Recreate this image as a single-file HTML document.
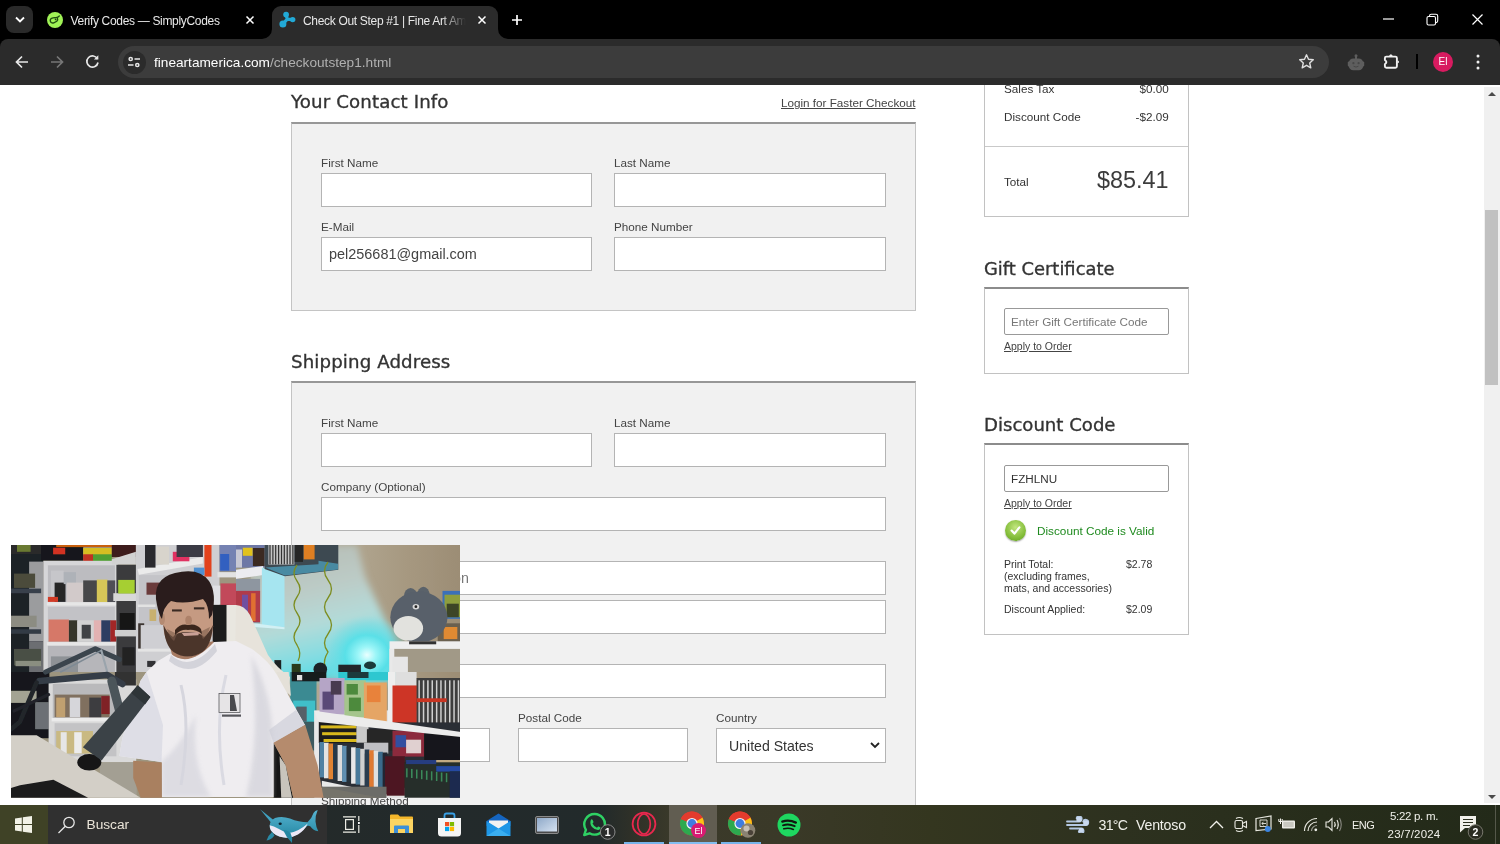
<!DOCTYPE html>
<html lang="en">
<head>
<meta charset="utf-8">
<title>Check Out Step #1 | Fine Art America</title>
<style>
*{box-sizing:border-box;margin:0;padding:0}
body{opacity:0.9999}
html,body{width:1500px;height:844px;overflow:hidden;background:#fff;font-family:"Liberation Sans",sans-serif;color:#333}
.abs{position:absolute}
#tabstrip{z-index:5;position:absolute;left:0;top:0;width:1500px;height:50px;background:#000}
#toolbar{z-index:6;position:absolute;left:0;top:39px;width:1500px;height:46px;background:#2b2b2b;border-radius:8px 8px 0 0}
#page{position:absolute;left:0;top:0;width:1484px;height:805px;background:#fff;overflow:hidden}
#scroll{position:absolute;left:1484px;top:87px;width:16px;height:716px;background:#f0f0f0}
#webcam{position:absolute;left:11px;top:545px;width:449px;height:253px;overflow:hidden;z-index:7;background:#999}
#taskbar{z-index:8;position:absolute;left:0;top:805px;width:1500px;height:39px;background:linear-gradient(90deg,#252a27 0,#232a2b 30%,#222a2b 40%,#2e3028 42%,#3b3a2a 45%,#3a3928 52%,#34361f 62%,#2d311f 75%,#272d1b 88%,#232a19 100%);overflow:hidden}
.ui{font-family:"DejaVu Sans","Liberation Sans",sans-serif}
.tabtxt{position:absolute;top:13.7px;font-size:12px;letter-spacing:-0.32px;line-height:14px;color:#e8e8e8;white-space:nowrap;font-family:"Liberation Sans",sans-serif}
h2{-webkit-text-stroke:0.35px #333;position:absolute;font-family:"DejaVu Sans","Liberation Sans",sans-serif;font-weight:normal;color:#333;white-space:nowrap;line-height:1}
.box{position:absolute;background:#f1f1f1;border:1px solid #c4c4c4;border-top:2px solid #979797}
.wbox{position:absolute;background:#fff;border:1px solid #c2c2c2}
.inp{position:absolute;background:#fff;border:1px solid #b4b4b4;height:34px}
.lbl{position:absolute;font-size:11.7px;color:#444;white-space:nowrap;line-height:15px}
.t{position:absolute;white-space:nowrap}
</style>
</head>
<body>
<div id="tabstrip">
<div class="abs" style="left:6px;top:6px;width:27px;height:27px;border-radius:8px;background:#2a2a2a"></div>
<svg class="abs" style="left:13px;top:14px" width="14" height="12" viewBox="0 0 14 12"><path d="M3 3.5 L7 7.5 L11 3.5" fill="none" stroke="#fff" stroke-width="1.8"/></svg>
<div class="abs" style="left:47px;top:12px;width:16px;height:16px;border-radius:50%;background:#a0f256"></div>
<svg class="abs" style="left:47px;top:12px" width="16" height="16" viewBox="0 0 16 16"><path d="M3.200 8.800 Q3 6.200 6 5.800 L9.500 5.500 Q11 5.300 12.300 4 M3.200 8.800 Q4 11.600 6.800 10.800 L9.800 9.200 Q11.300 7.800 10.300 5.600" fill="none" stroke="#1f4d10" stroke-width="1.300" stroke-linecap="round"/><circle cx="8.600" cy="7.400" r="0.900" fill="#1f4d10"/></svg>
<div class="tabtxt" style="left:70.5px">Verify Codes — SimplyCodes</div>
<svg class="abs" style="left:245px;top:15px" width="10" height="10" viewBox="0 0 10 10"><path d="M1.5 1.5 L8.5 8.5 M8.5 1.5 L1.5 8.5" stroke="#fff" stroke-width="1.5"/></svg>
<div class="abs" style="left:272px;top:6px;width:226px;height:34px;border-radius:9px 9px 0 0;background:#2b2b2b"></div>
<svg class="abs" style="left:262px;top:29px" width="10" height="10" viewBox="0 0 10 10"><path d="M10 0 V10 H0 A10 10 0 0 0 10 0Z" fill="#2b2b2b"/></svg>
<svg class="abs" style="left:498px;top:29px" width="10" height="10" viewBox="0 0 10 10"><path d="M0 0 V10 H10 A10 10 0 0 1 0 0Z" fill="#2b2b2b"/></svg>
<svg class="abs" style="left:279px;top:11px" width="18" height="18" viewBox="0 0 18 18"><g fill="#22a9d6"><circle cx="7.100" cy="3.600" r="2.900"/><circle cx="13.700" cy="8.600" r="2.700"/><circle cx="3.900" cy="12.900" r="3.500"/></g><path d="M7.100 3.600 L8.300 8.200 L13.700 8.600 M8.300 8.200 L3.900 12.900" fill="none" stroke="#22a9d6" stroke-width="3.200" stroke-linecap="round"/></svg>
<div class="tabtxt" style="left:303px;width:163px;overflow:hidden;-webkit-mask-image:linear-gradient(90deg,#000 85%,transparent);mask-image:linear-gradient(90deg,#000 85%,transparent)">Check Out Step #1 | Fine Art America</div>
<svg class="abs" style="left:477px;top:15px" width="10" height="10" viewBox="0 0 10 10"><path d="M1.5 1.5 L8.5 8.5 M8.5 1.5 L1.5 8.5" stroke="#fff" stroke-width="1.5"/></svg>
<svg class="abs" style="left:511px;top:14px" width="12" height="12" viewBox="0 0 12 12"><path d="M6 1 V11 M1 6 H11" stroke="#fff" stroke-width="1.7"/></svg>
<svg class="abs" style="left:1383px;top:18px" width="11" height="2" viewBox="0 0 11 2"><path d="M0 1 H11" stroke="#fff" stroke-width="1.2"/></svg>
<svg class="abs" style="left:1426px;top:13px" width="13" height="13" viewBox="0 0 13 13"><rect x="1" y="3.5" width="8.5" height="8.5" rx="1.5" fill="none" stroke="#fff" stroke-width="1.1"/><path d="M3.5 3.5 V3 A1.7 1.7 0 0 1 5.2 1.3 H10 A1.7 1.7 0 0 1 11.7 3 V8 A1.7 1.7 0 0 1 10 9.6 H9.5" fill="none" stroke="#fff" stroke-width="1.1"/></svg>
<svg class="abs" style="left:1472px;top:14px" width="11" height="11" viewBox="0 0 11 11"><path d="M0.5 0.5 L10.5 10.5 M10.5 0.5 L0.5 10.5" stroke="#fff" stroke-width="1.2"/></svg>
</div>
<div id="toolbar">
<svg class="abs" style="left:14px;top:14.500px" width="16" height="16" viewBox="0 0 16 16"><path d="M14 8 H3 M8 2.5 L2.5 8 L8 13.5" fill="none" stroke="#e8e8e8" stroke-width="1.7"/></svg>
<svg class="abs" style="left:48.500px;top:14.500px" width="16" height="16" viewBox="0 0 16 16"><path d="M2 8 H13 M8 2.5 L13.5 8 L8 13.5" fill="none" stroke="#777" stroke-width="1.7"/></svg>
<svg class="abs" style="left:84px;top:14px" width="17" height="17" viewBox="0 0 17 17"><path d="M13.5 6 A5.6 5.6 0 1 0 14 9.5" fill="none" stroke="#e8e8e8" stroke-width="1.7"/><path d="M14.3 2.2 V6.6 H9.9 Z" fill="#e8e8e8"/></svg>
<div class="abs" style="left:118px;top:6.500px;width:1211px;height:32.500px;border-radius:16.500px;background:#3c3c3c"></div>
<div class="abs" style="left:122.500px;top:11.500px;width:23px;height:23px;border-radius:50%;background:#2b2b2b"></div>
<svg class="abs" style="left:127px;top:15.500px" width="14" height="14" viewBox="0 0 14 14"><g fill="none" stroke="#e8e8e8" stroke-width="1.5"><circle cx="3.7" cy="4" r="1.6"/><path d="M7.5 4 H13"/><circle cx="10.3" cy="10" r="1.6"/><path d="M1 10 H6.5"/></g></svg>
<div class="abs" style="left:154px;top:14.8px;font-size:13.65px;line-height:18px;color:#fff;white-space:nowrap">fineartamerica.com<span style="color:#b0b0b0">/checkoutstep1.html</span></div>
<svg class="abs" style="left:1298px;top:14px" width="17" height="17" viewBox="0 0 17 17"><path d="M8.5 1.8 L10.5 6.3 L15.3 6.8 L11.7 10 L12.8 14.8 L8.5 12.3 L4.2 14.8 L5.3 10 L1.7 6.8 L6.5 6.3 Z" fill="none" stroke="#e0e0e0" stroke-width="1.4" stroke-linejoin="round"/></svg>
<svg class="abs" style="left:1347px;top:14px" width="18" height="18" viewBox="0 0 18 18"><g fill="#5e5e5e"><rect x="1.800" y="5.500" width="14.400" height="11.700" rx="4.500"/><rect x="8" y="2.500" width="2" height="4"/><circle cx="9" cy="2.700" r="1.500"/><rect x="0.800" y="8.500" width="2.500" height="5" rx="1"/><rect x="14.700" y="8.500" width="2.500" height="5" rx="1"/></g><circle cx="6.400" cy="10.200" r="1.100" fill="#474747"/><circle cx="11.600" cy="10.200" r="1.100" fill="#474747"/><path d="M6.500 13.200 Q9 15 11.500 13.200" fill="none" stroke="#474747" stroke-width="1"/></svg>
<svg class="abs" style="left:1382px;top:12px" width="20" height="20" viewBox="0 0 20 20"><path d="M4.400 5.600 H13.400 Q14.900 5.600 14.900 7.100 V15.300 Q14.900 16.800 13.400 16.800 H4.400 Q2.900 16.800 2.900 15.300 V13.200 Q5.900 11.100 2.900 9 V7.100 Q2.900 5.600 4.400 5.600 Z" fill="none" stroke="#f0f0f0" stroke-width="1.900" stroke-linejoin="round"/><path d="M7 5 Q8.900 1.600 10.800 5 Z M15.500 9.200 Q18.700 10.900 15.500 12.600 Z" fill="#f0f0f0"/></svg>
<div class="abs" style="left:1416px;top:15px;width:2px;height:15px;background:#000"></div>
<div class="abs" style="left:1433px;top:13px;width:20px;height:20px;border-radius:50%;background:#d81b60;color:#fff;font-size:10px;line-height:20px;text-align:center">El</div>
<svg class="abs" style="left:1476px;top:15px" width="4" height="16" viewBox="0 0 4 16"><g fill="#f0f0f0"><circle cx="2" cy="2" r="1.5"/><circle cx="2" cy="8" r="1.5"/><circle cx="2" cy="14" r="1.5"/></g></svg>
</div>
<div id="page">
<h2 style="left:291px;top:93px;font-size:18.2px;letter-spacing:0.12px">Your Contact Info</h2>
<div class="t" style="left:781px;top:96px;font-size:11.7px;color:#444;text-decoration:underline">Login for Faster Checkout</div>
<div class="box" style="left:291px;top:122px;width:625px;height:189px"></div>
<div class="lbl" style="left:321px;top:155px">First Name</div>
<div class="lbl" style="left:614px;top:155px">Last Name</div>
<div class="inp" style="left:321px;top:173px;width:271px"></div>
<div class="inp" style="left:614px;top:173px;width:272px"></div>
<div class="lbl" style="left:321px;top:219px">E-Mail</div>
<div class="lbl" style="left:614px;top:219px">Phone Number</div>
<div class="inp" style="left:321px;top:237px;width:271px"></div>
<div class="inp" style="left:614px;top:237px;width:272px"></div>
<div class="t" style="left:329px;top:246px;font-size:14.45px;color:#444">pel256681@gmail.com</div>

<h2 style="left:291px;top:353px;font-size:18.2px;letter-spacing:0.12px">Shipping Address</h2>
<div class="box" style="left:291px;top:381px;width:625px;height:440px"></div>
<div class="lbl" style="left:321px;top:415px">First Name</div>
<div class="lbl" style="left:614px;top:415px">Last Name</div>
<div class="inp" style="left:321px;top:433px;width:271px"></div>
<div class="inp" style="left:614px;top:433px;width:272px"></div>
<div class="lbl" style="left:321px;top:479px">Company (Optional)</div>
<div class="inp" style="left:321px;top:497px;width:565px"></div>
<div class="lbl" style="left:321px;top:543px">Address</div>
<div class="inp" style="left:321px;top:561px;width:565px"></div>
<div class="t" style="left:329px;top:569.5px;font-size:14.25px;color:#777">Begin Typing Location</div>
<div class="inp" style="left:321px;top:600px;width:565px"></div>
<div class="lbl" style="left:321px;top:646px">City</div>
<div class="inp" style="left:321px;top:664px;width:565px"></div>
<div class="lbl" style="left:321px;top:710px">State</div>
<div class="lbl" style="left:518px;top:710px">Postal Code</div>
<div class="lbl" style="left:716px;top:710px">Country</div>
<div class="inp" style="left:321px;top:728px;width:169px"></div>
<div class="inp" style="left:518px;top:728px;width:170px"></div>
<div class="inp" style="left:716px;top:728px;width:170px;height:35px"></div>
<div class="t" style="left:729px;top:737.5px;font-size:14.1px;color:#333">United States</div>
<svg class="abs" style="left:869px;top:740px" width="12" height="10" viewBox="0 0 12 10"><path d="M2 3 L6 7 L10 3" fill="none" stroke="#222" stroke-width="1.8"/></svg>
<div class="lbl" style="left:321px;top:793px">Shipping Method</div>

<div class="wbox" style="left:984px;top:60px;width:205px;height:157px"></div>
<div class="abs" style="left:985px;top:146px;width:203px;height:1px;background:#c9c9c9"></div>
<div class="t" style="left:1004px;top:82px;font-size:11.7px;color:#333">Sales Tax</div>
<div class="t" style="left:1139.5px;top:82px;font-size:11.7px;color:#333">$0.00</div>
<div class="t" style="left:1004px;top:110px;font-size:11.7px;color:#333">Discount Code</div>
<div class="t" style="left:1135.5px;top:110px;font-size:11.7px;color:#333">-$2.09</div>
<div class="t" style="left:1004px;top:174.5px;font-size:11.7px;color:#333">Total</div>
<div class="t" style="left:1097px;top:166.5px;font-size:23.4px;color:#3c3c3c">$85.41</div>

<h2 style="left:984px;top:259.5px;font-size:17.9px">Gift Certificate</h2>
<div class="wbox" style="left:984px;top:287px;width:205px;height:87px;border-top:2px solid #8c8c8c"></div>
<div class="inp" style="left:1004px;top:308px;width:165px;height:27px;border-color:#999;border-radius:2px"></div>
<div class="t" style="left:1011px;top:314.5px;font-size:11.7px;color:#777">Enter Gift Certificate Code</div>
<div class="t" style="left:1004px;top:339.5px;font-size:10.5px;color:#444;text-decoration:underline">Apply to Order</div>

<h2 style="left:984px;top:415.5px;font-size:18.1px">Discount Code</h2>
<div class="wbox" style="left:984px;top:443px;width:205px;height:192px;border-top:2px solid #8c8c8c"></div>
<div class="inp" style="left:1004px;top:465px;width:165px;height:27px;border-color:#999;border-radius:2px"></div>
<div class="t" style="left:1011px;top:471.5px;font-size:11.7px;color:#333">FZHLNU</div>
<div class="t" style="left:1004px;top:496.5px;font-size:10.5px;color:#444;text-decoration:underline">Apply to Order</div>
<div class="abs" style="left:1005px;top:519.5px;width:21px;height:21px;border-radius:50%;background:radial-gradient(circle at 50% 35%,#c2e67e,#7fba35 65%,#5f9c24);box-shadow:0 1px 1.5px rgba(0,0,0,.35)"></div>
<svg class="abs" style="left:1009px;top:523.5px" width="13" height="13" viewBox="0 0 13 13"><path d="M2.6 6.6 L5.4 9.6 L10.4 3.4" fill="none" stroke="#fff" stroke-width="2.2" stroke-linecap="round" stroke-linejoin="round"/></svg>
<div class="t" style="left:1037px;top:524px;font-size:11.75px;color:#1e8a1e">Discount Code is Valid</div>
<div class="t" style="left:1004px;top:557.5px;font-size:10.5px;color:#333;line-height:12px">Print Total:<br>(excluding frames,<br>mats, and accessories)</div>
<div class="t" style="left:1126px;top:557.5px;font-size:10.5px;color:#333;line-height:12px">$2.78</div>
<div class="t" style="left:1004px;top:603px;font-size:10.5px;color:#333;line-height:12px">Discount Applied:</div>
<div class="t" style="left:1126px;top:603px;font-size:10.5px;color:#333;line-height:12px">$2.09</div>
</div>
<div id="scroll">
<svg class="abs" style="left:4px;top:5px" width="8" height="4" viewBox="0 0 8 4"><path d="M0 4 L4 0 L8 4Z" fill="#4a4a4a"/></svg>
<div class="abs" style="left:1px;top:123px;width:13px;height:175px;background:#c1c1c1"></div>
<svg class="abs" style="left:4px;top:707.500px" width="8" height="4" viewBox="0 0 8 4"><path d="M0 0 L4 4 L8 0Z" fill="#4a4a4a"/></svg>
</div>
<div id="webcam"><!--WC--><svg width="449" height="253" viewBox="0 0 449 253" style="position:absolute;left:0;top:0"><defs><linearGradient id="wallg" x1="0" y1="0" x2="1" y2="0"><stop offset="0" stop-color="#b4aa96"/><stop offset="0.5" stop-color="#b0a58f"/><stop offset="0.75" stop-color="#a69880"/><stop offset="1" stop-color="#9c8d75"/></linearGradient><linearGradient id="beam" x1="0" y1="0" x2="0.25" y2="1"><stop offset="0" stop-color="#b5bab2"/><stop offset="0.4" stop-color="#bccbc6"/><stop offset="0.65" stop-color="#b4dad8"/><stop offset="0.88" stop-color="#84dde2"/><stop offset="1" stop-color="#62dbe3"/></linearGradient><radialGradient id="glow"><stop offset="0" stop-color="#eaffff"/><stop offset="0.2" stop-color="#9df6f8"/><stop offset="0.5" stop-color="#55e0e8" stop-opacity="0.9"/><stop offset="0.8" stop-color="#6adde4" stop-opacity="0.4"/><stop offset="1" stop-color="#84dde2" stop-opacity="0"/></radialGradient><filter id="b2" x="-20%" y="-20%" width="140%" height="140%"><feGaussianBlur stdDeviation="2"/></filter><filter id="b4" x="-10%" y="-10%" width="120%" height="120%"><feGaussianBlur stdDeviation="3.5"/></filter><filter id="soft" x="-2%" y="-2%" width="104%" height="104%"><feGaussianBlur stdDeviation="0.65"/></filter></defs><g filter="url(#soft)"><rect x="0" y="0" width="449" height="253" fill="#9d957f"/>
<rect x="240" y="0" width="209" height="200" fill="url(#wallg)"/>
<polygon points="240,0 346,0 354,32 381,90 386,135 240,135" fill="url(#beam)" filter="url(#b4)"/>
<ellipse cx="356" cy="110" rx="44" ry="40" fill="url(#glow)"/>
<rect x="0.0" y="0.0" width="32.4" height="127.0" fill="#1c2026"/>
<rect x="18.1" y="16.6" width="14.3" height="79.7" fill="#9b9c9e"/>
<rect x="18.1" y="96.3" width="14.3" height="30.7" fill="#6c6e72"/>
<rect x="0.0" y="0.0" width="30.1" height="9.0" fill="#2a2c2a"/>
<rect x="6.0" y="0.0" width="13.6" height="6.8" fill="#6a7a30"/>
<rect x="3.0" y="28.6" width="21.1" height="14.3" fill="#4c4c3a"/>
<rect x="0.0" y="43.6" width="30.1" height="4.6" fill="#39414b"/>
<rect x="0.0" y="70.7" width="25.6" height="11.3" fill="#8c8c82"/>
<rect x="0.0" y="84.3" width="30.1" height="4.5" fill="#333b45"/>
<rect x="3.0" y="103.9" width="27.1" height="16.5" fill="#4a5044"/>
<rect x="4.5" y="115.9" width="25.6" height="5.3" fill="#8a8e80"/>
<rect x="30.1" y="0.0" width="42.1" height="15.8" fill="#19191b"/>
<rect x="42.1" y="2.7" width="12.1" height="6.6" fill="#d23222"/>
<rect x="45.2" y="0.0" width="58.7" height="2.1" fill="#c8600f"/>
<rect x="72.2" y="3.0" width="28.6" height="6.8" fill="#d6be22"/>
<rect x="81.3" y="9.3" width="19.5" height="9.1" fill="#4f9f31"/>
<rect x="72.2" y="9.3" width="9.8" height="9.1" fill="#c03020"/>
<rect x="100.8" y="0.0" width="24.1" height="12.0" fill="#3e1a1a"/>
<rect x="32.4" y="15.8" width="74.5" height="111.2" fill="#d6d6d8"/>
<rect x="36.9" y="20.3" width="67.0" height="36.9" fill="#bcbcc0"/>
<rect x="36.9" y="61.7" width="67.0" height="35.4" fill="#c2c2c6"/>
<rect x="36.9" y="100.8" width="67.0" height="26.2" fill="#b6b6ba"/>
<rect x="39.9" y="25.6" width="12.8" height="31.6" fill="#c6c6ca"/>
<rect x="43.6" y="37.6" width="10.9" height="19.3" fill="#262628"/>
<rect x="52.7" y="27.1" width="12.3" height="12.0" fill="#aeb2b8"/>
<rect x="55.7" y="37.6" width="23.3" height="19.6" fill="#d2caca"/>
<rect x="72.2" y="35.4" width="13.9" height="21.8" fill="#464648"/>
<rect x="85.8" y="34.6" width="10.8" height="22.6" fill="#d6c658"/>
<rect x="96.3" y="35.4" width="7.9" height="21.8" fill="#505054"/>
<rect x="36.9" y="51.9" width="10.1" height="5.0" fill="#d23a28"/>
<rect x="35.8" y="57.2" width="69.9" height="3.3" fill="#e6e6e6"/>
<rect x="37.6" y="74.5" width="20.3" height="22.1" fill="#d67868"/>
<rect x="57.9" y="75.3" width="8.6" height="21.3" fill="#36362c"/>
<rect x="66.2" y="75.3" width="16.9" height="21.3" fill="#d2d2d2"/>
<rect x="70.7" y="79.8" width="9.1" height="13.8" fill="#404244"/>
<rect x="82.8" y="75.3" width="7.8" height="21.3" fill="#e2b2b2"/>
<rect x="90.3" y="75.3" width="9.3" height="21.3" fill="#2e3e62"/>
<rect x="99.3" y="75.3" width="6.1" height="21.3" fill="#a22828"/>
<rect x="35.8" y="97.1" width="69.9" height="3.3" fill="#e6e6e6"/>
<rect x="39.9" y="111.4" width="27.1" height="15.6" fill="#8e9296"/>
<rect x="105.4" y="19.6" width="19.8" height="107.4" fill="#3a3a3c"/>
<polygon points="100.8,14.3 124.9,6.8 124.9,19.6 100.8,19.6" fill="#d2d2d2"/>
<rect x="102.3" y="48.2" width="22.9" height="7.8" fill="#d8d8d8"/>
<rect x="103.9" y="85.0" width="21.3" height="6.4" fill="#cecece"/>
<rect x="107.2" y="34.9" width="16.5" height="13.6" fill="#a6cf30"/>
<rect x="108.7" y="68.0" width="15.0" height="16.6" fill="#161618"/>
<rect x="111.4" y="102.3" width="12.3" height="18.1" fill="#222224"/>
<rect x="124.9" y="0.0" width="83.6" height="127.0" fill="#cfcfd2"/>
<rect x="127.9" y="30.1" width="67.8" height="75.3" fill="#c4c4c8"/>
<polygon points="126.4,24.1 191.9,12.0 191.9,18.4 127.9,29.7" fill="#ebebeb"/>
<rect x="134.0" y="0.0" width="10.5" height="22.6" fill="#2b2b2d"/>
<rect x="145.2" y="1.5" width="12.8" height="18.1" fill="#d8d4cc"/>
<rect x="161.8" y="6.8" width="16.6" height="9.5" fill="#e03262"/>
<rect x="165.6" y="0.0" width="26.3" height="12.0" fill="#3a3a44"/>
<rect x="193.4" y="0.0" width="7.1" height="31.6" fill="#e2431f"/>
<rect x="182.9" y="22.6" width="10.5" height="7.5" fill="#5090d0"/>
<rect x="135.5" y="37.6" width="15.0" height="12.1" fill="#6a3a3a"/>
<rect x="126.7" y="59.5" width="17.8" height="2.5" fill="#e2e2e2"/>
<rect x="138.5" y="64.4" width="6.7" height="11.6" fill="#c8b070"/>
<rect x="127.2" y="78.3" width="6.0" height="25.6" fill="#3c3430"/>
<rect x="129.7" y="80.1" width="30.1" height="23.8" fill="#cfcfd3"/>
<rect x="126.7" y="103.6" width="34.3" height="3.0" fill="#e4e4e4"/>
<rect x="136.2" y="115.9" width="8.3" height="6.0" fill="#303034"/>
<rect x="208.5" y="0.0" width="16.5" height="26.3" fill="#7482b2"/>
<rect x="209.2" y="9.0" width="9.0" height="16.6" fill="#3060c0"/>
<rect x="206.5" y="27.1" width="18.5" height="5.3" fill="#e2e2e2"/>
<rect x="209.5" y="38.4" width="15.5" height="21.8" fill="#c24a5a"/>
<rect x="201.7" y="40.6" width="7.5" height="18.9" fill="#e0e0e4"/>
<rect x="225.0" y="0.0" width="28.6" height="22.6" fill="#6e78a6"/>
<rect x="225.0" y="4.5" width="6.0" height="18.1" fill="#c8c8d4"/>
<rect x="231.8" y="2.7" width="9.8" height="8.1" fill="#e2c21e"/>
<rect x="241.9" y="3.0" width="11.7" height="18.1" fill="#3a2a20"/>
<polygon points="225.0,24.8 252.1,21.1 252.1,30.1 225.0,33.9" fill="#ececf0"/>
<rect x="225.0" y="33.9" width="24.1" height="44.4" fill="#8e96a0"/>
<rect x="225.0" y="45.9" width="24.1" height="31.2" fill="#b03a4a"/>
<rect x="231.0" y="49.7" width="6.0" height="25.6" fill="#7050a0"/>
<rect x="240.1" y="48.2" width="4.5" height="27.8" fill="#e07030"/>
<polygon points="250.9,22.6 273.5,30.6 273.5,82.3 250.9,80.1" fill="#a6e5f0"/>
<polygon points="243.1,78.3 273.5,82.3 273.5,84.3 243.1,82.0" fill="#d2f0f4"/>
<polygon points="253.6,0.0 327.3,0.0 327.3,24.8 273.9,31.2 253.6,24.1" fill="#3c4851"/>
<polygon points="254.3,22.6 273.9,30.6 327.0,24.5 327.0,18.8 307.5,15.8 307.5,19.3" fill="#4a8aa2"/>
<rect x="257.4" y="0.0" width="26.0" height="19.6" fill="#c4c4c4"/>
<rect x="258.4" y="0.0" width="1.2" height="19.3" fill="#303030"/>
<rect x="261.3" y="0.0" width="1.2" height="19.3" fill="#303030"/>
<rect x="264.1" y="0.0" width="1.2" height="19.3" fill="#303030"/>
<rect x="267.0" y="0.0" width="1.2" height="19.3" fill="#303030"/>
<rect x="269.9" y="0.0" width="1.2" height="19.3" fill="#303030"/>
<rect x="272.7" y="0.0" width="1.2" height="19.3" fill="#303030"/>
<rect x="275.6" y="0.0" width="1.2" height="19.3" fill="#303030"/>
<rect x="278.4" y="0.0" width="1.2" height="19.3" fill="#303030"/>
<rect x="281.3" y="0.0" width="1.2" height="19.3" fill="#303030"/>
<rect x="283.7" y="0.0" width="8.3" height="16.9" fill="#262628"/>
<rect x="292.7" y="0.0" width="10.9" height="14.4" fill="#df7f20"/>
<path d="M286 20 q-6 8 0 16 q6 8 0 16 q-6 8 0 16 q6 8 0 16 q-6 8 0 16 q5 8 1 16" fill="none" stroke="#7d8e22" stroke-width="1.3"/>
<path d="M317 17 q-7 9 0 18 q7 9 0 18 q-7 9 0 18 q7 9 0 18 q-7 9 0 18 q-5 8 -3 14" fill="none" stroke="#7d8e22" stroke-width="1.3"/>
<rect x="431.5" y="45.9" width="18.5" height="27.9" fill="#3a70b8"/>
<rect x="433.5" y="49.7" width="16.5" height="22.5" fill="#8e9e3e"/>
<rect x="435.7" y="58.7" width="12.1" height="13.5" fill="#3c4428"/>
<rect x="426.7" y="78.3" width="23.3" height="20.3" fill="#6a6050"/>
<rect x="432.7" y="82.0" width="13.6" height="12.1" fill="#e08a30"/>
<ellipse cx="399.6" cy="51.9" rx="6.8" ry="9.0" fill="#5a626a"/>
<ellipse cx="412.4" cy="50.4" rx="6.3" ry="8.7" fill="#5a626a"/>
<ellipse cx="407.9" cy="72.2" rx="28.6" ry="25.6" fill="#59616a"/>
<ellipse cx="397.3" cy="83.2" rx="14.8" ry="12.3" fill="#e2e2de"/>
<ellipse cx="404.9" cy="61.7" rx="3.3" ry="2.7" fill="#d8d8d8"/>
<ellipse cx="404.9" cy="61.7" rx="1.4" ry="1.4" fill="#222"/>
<rect x="378.5" y="96.3" width="71.5" height="7.9" fill="#eeeeee"/>
<rect x="383.0" y="103.9" width="67.0" height="23.1" fill="#a19987"/>
<rect x="378.2" y="103.9" width="5.1" height="23.1" fill="#e9e9e9"/>
<rect x="398.1" y="96.3" width="27.1" height="3.0" fill="#303030"/>
<rect x="381.5" y="111.7" width="15.4" height="15.3" fill="#e6e6e6"/>
<rect x="263.4" y="115.1" width="6.8" height="11.9" fill="#1e2224"/>
<rect x="280.7" y="118.9" width="9.0" height="8.1" fill="#2a3a1e"/>
<ellipse cx="309.3" cy="124.2" rx="6.8" ry="6.8" fill="#1e2226"/>
<rect x="327.3" y="119.7" width="22.6" height="7.3" fill="#22282c"/>
<ellipse cx="359.0" cy="120.4" rx="6.0" ry="3.8" fill="#1c3a3a"/>
<rect x="0.0" y="127.0" width="38.4" height="66.2" fill="#14181c"/>
<rect x="0.0" y="145.8" width="25.6" height="12.1" fill="#a3a393"/>
<rect x="24.1" y="157.1" width="13.5" height="27.1" fill="#6c7074"/>
<rect x="37.6" y="134.5" width="87.6" height="82.8" fill="#d9d9d9"/>
<rect x="41.8" y="138.7" width="63.6" height="35.0" fill="#b9b9bb"/>
<rect x="43.6" y="149.6" width="55.0" height="22.6" fill="#80705e"/>
<rect x="58.7" y="152.6" width="10.5" height="19.6" fill="#d6d6da"/>
<rect x="45.2" y="152.6" width="9.0" height="19.6" fill="#c0a070"/>
<rect x="78.3" y="152.6" width="12.0" height="19.6" fill="#3c3c40"/>
<rect x="90.3" y="151.1" width="8.3" height="18.0" fill="#802028"/>
<rect x="40.6" y="172.9" width="67.8" height="3.5" fill="#ebebeb"/>
<rect x="43.6" y="178.2" width="61.8" height="33.1" fill="#c3c3c5"/>
<rect x="45.2" y="186.0" width="36.8" height="22.6" fill="#c9b982"/>
<rect x="49.7" y="187.2" width="6.0" height="21.1" fill="#e6e6e6"/>
<rect x="63.2" y="187.2" width="7.5" height="21.1" fill="#ececec"/>
<rect x="88.8" y="217.3" width="36.9" height="35.4" fill="#a39f93"/>
<rect x="103.9" y="127.0" width="21.0" height="13.5" fill="#303032"/>
<rect x="279.2" y="127.0" width="26.3" height="78.3" fill="#3a8a92"/>
<rect x="280.7" y="127.0" width="34.6" height="9.3" fill="#171b1f"/>
<rect x="286.0" y="130.0" width="5.2" height="5.3" fill="#e0e0e0"/>
<rect x="282.2" y="155.6" width="21.8" height="21.8" fill="#3fbfc8"/>
<rect x="285.2" y="161.6" width="10.5" height="15.1" fill="#566068"/>
<rect x="279.2" y="176.7" width="25.6" height="28.6" fill="#3c5a5e"/>
<rect x="327.3" y="127.0" width="50.0" height="8.3" fill="#2fc7d0"/>
<rect x="336.4" y="127.0" width="21.1" height="6.0" fill="#1c3a3c"/>
<rect x="303.3" y="165.4" width="146.7" height="88.6" fill="#e2e2e2"/>
<rect x="308.5" y="133.0" width="25.2" height="36.4" fill="#b5a5c6"/>
<rect x="311.5" y="146.6" width="11.3" height="18.0" fill="#5a4a78"/>
<rect x="319.8" y="136.0" width="10.6" height="13.6" fill="#4a3a50"/>
<rect x="333.4" y="135.3" width="21.3" height="37.2" fill="#a5c58d"/>
<rect x="335.6" y="139.0" width="11.3" height="10.6" fill="#4e8a3e"/>
<rect x="337.9" y="152.6" width="12.0" height="13.5" fill="#4e8a3e"/>
<rect x="352.9" y="137.5" width="22.9" height="39.5" fill="#e5a565"/>
<rect x="355.9" y="140.5" width="13.6" height="16.6" fill="#e8823a"/>
<rect x="377.0" y="127.0" width="7.8" height="51.5" fill="#eeeeee"/>
<rect x="384.5" y="127.0" width="21.1" height="13.8" fill="#dedede"/>
<rect x="381.5" y="140.5" width="24.4" height="39.5" fill="#cd3525"/>
<rect x="405.6" y="133.0" width="44.4" height="53.0" fill="#3c3c3c"/>
<rect x="407.4" y="135.3" width="1.5" height="48.9" fill="#cfcfcf"/>
<rect x="411.8" y="135.3" width="1.5" height="48.9" fill="#cfcfcf"/>
<rect x="416.1" y="135.3" width="1.6" height="48.9" fill="#cfcfcf"/>
<rect x="420.5" y="135.3" width="1.5" height="48.9" fill="#cfcfcf"/>
<rect x="424.9" y="135.3" width="1.5" height="48.9" fill="#cfcfcf"/>
<rect x="429.2" y="135.3" width="1.5" height="48.9" fill="#cfcfcf"/>
<rect x="433.6" y="135.3" width="1.5" height="48.9" fill="#cfcfcf"/>
<rect x="438.0" y="135.3" width="1.5" height="48.9" fill="#cfcfcf"/>
<rect x="442.3" y="135.3" width="1.5" height="48.9" fill="#cfcfcf"/>
<rect x="446.7" y="135.3" width="1.5" height="48.9" fill="#cfcfcf"/>
<rect x="405.6" y="153.3" width="30.1" height="3.8" fill="#c83424"/>
<rect x="303.3" y="165.8" width="4.8" height="73.3" fill="#e8e8e8"/>
<rect x="308.1" y="177.4" width="141.9" height="65.5" fill="#2c2e34"/>
<rect x="307.8" y="175.2" width="48.4" height="22.8" fill="#1e1e1e"/>
<rect x="309.6" y="180.4" width="35.8" height="3.0" fill="#d9b91f"/>
<rect x="311.1" y="187.2" width="34.6" height="3.0" fill="#d9b91f"/>
<rect x="312.6" y="194.0" width="36.1" height="3.0" fill="#d9b91f"/>
<rect x="345.4" y="179.7" width="12.1" height="18.0" fill="#c9c9c9"/>
<rect x="355.9" y="184.2" width="25.9" height="21.4" fill="#262628"/>
<rect x="352.9" y="197.7" width="24.4" height="10.9" fill="#bfbfc3"/>
<rect x="381.5" y="185.7" width="31.9" height="25.9" fill="#8c2c3c"/>
<rect x="384.5" y="190.2" width="10.6" height="12.1" fill="#3050a0"/>
<rect x="395.1" y="194.7" width="15.0" height="13.6" fill="#e0d0d0"/>
<rect x="413.1" y="188.7" width="36.9" height="28.9" fill="#19191b"/>
<rect x="420.7" y="215.0" width="29.3" height="4.1" fill="#c2aa82"/>
<polygon points="303.3,165.8 450.0,186.9 450.0,192.0 307.5,177.0" fill="#ececec"/>
<rect x="308.5" y="197.0" width="4.7" height="35.4" fill="#4f81a3"/>
<rect x="313.0" y="197.7" width="4.7" height="35.6" fill="#e3e3e3"/>
<rect x="317.6" y="198.5" width="4.6" height="35.7" fill="#df8232"/>
<rect x="322.1" y="199.2" width="4.6" height="35.9" fill="#27384a"/>
<rect x="326.6" y="200.0" width="4.7" height="36.0" fill="#dcdcdc"/>
<rect x="331.1" y="200.8" width="4.7" height="36.1" fill="#5f8fb1"/>
<rect x="335.6" y="201.5" width="4.7" height="36.3" fill="#28303a"/>
<rect x="340.1" y="202.3" width="4.7" height="36.4" fill="#e8e8e8"/>
<rect x="344.7" y="203.0" width="4.6" height="36.6" fill="#4a7a9a"/>
<rect x="349.2" y="203.8" width="4.6" height="36.7" fill="#d0d0d0"/>
<rect x="353.7" y="204.5" width="4.7" height="36.9" fill="#2c3c50"/>
<rect x="358.2" y="205.3" width="4.7" height="37.0" fill="#e07a30"/>
<rect x="362.7" y="206.0" width="4.7" height="37.2" fill="#e0e0e0"/>
<rect x="367.2" y="206.8" width="4.7" height="37.3" fill="#3a6a8a"/>
<rect x="371.7" y="207.5" width="4.7" height="37.5" fill="#202830"/>
<rect x="374.0" y="211.3" width="19.9" height="39.4" fill="#4d1921"/>
<rect x="393.6" y="217.3" width="56.4" height="35.4" fill="#252d29"/>
<rect x="395.1" y="223.3" width="1.5" height="9.1" fill="#3a8a5a"/>
<rect x="400.0" y="223.9" width="1.6" height="9.1" fill="#3a8a5a"/>
<rect x="405.0" y="224.5" width="1.5" height="9.1" fill="#3a8a5a"/>
<rect x="410.0" y="225.1" width="1.5" height="9.1" fill="#3a8a5a"/>
<rect x="414.9" y="225.7" width="1.6" height="9.1" fill="#3a8a5a"/>
<rect x="419.9" y="226.3" width="1.5" height="9.1" fill="#3a8a5a"/>
<rect x="424.9" y="226.9" width="1.5" height="9.1" fill="#3a8a5a"/>
<rect x="429.8" y="227.5" width="1.6" height="9.1" fill="#3a8a5a"/>
<rect x="434.8" y="228.1" width="1.5" height="9.1" fill="#3a8a5a"/>
<rect x="439.8" y="228.7" width="1.5" height="9.1" fill="#3a8a5a"/>
<rect x="444.7" y="229.3" width="1.6" height="9.1" fill="#3a8a5a"/>
<rect x="395.1" y="215.0" width="30.1" height="4.1" fill="#283c80"/>
<rect x="425.2" y="221.1" width="24.8" height="5.5" fill="#2549a1"/>
<rect x="438.7" y="226.3" width="11.3" height="26.4" fill="#1c2c50"/>
<polygon points="310.8,235.7 375.5,249.2 375.5,254.0 310.8,241.7" fill="#e9e9e9"/>
<rect x="310.8" y="241.7" width="64.7" height="12.3" fill="#6c6c68"/>
<polygon points="310.8,241.7 375.5,254.0 310.8,254.0" fill="#75736b"/>
<polygon points="201.7,59.9 217.5,59.9 217.5,97.8 201.7,97.8" fill="#1b1b1b"/>
<polygon points="215.5,59.9 225.0,59.9 225.0,99.3 215.5,97.8" fill="#e9e7e0"/>
<path d="M225 60 q8 0 14 10 q10 22 18 40 q8 12 22 22 l-6 40 l-50 0 Z" fill="#e7e3db"/>
<polygon points="265.6,127.0 277.7,127.0 279.9,151.1 270.2,142.1" fill="#e4e0d8"/>
<polygon points="262.6,197.7 274.7,220.3 282.2,252.7 262.6,252.7" fill="#161616"/>
<polygon points="268.6,211.3 274.7,220.3 281.0,252.7 270.2,252.7" fill="#c8c4bc"/>
<polygon points="0.0,190.2 25.6,190.2 129.7,252.7 0.0,252.7" fill="#d3cfc7"/>
<polygon points="0.0,242.9 9.0,240.2 42.4,234.8 77.1,252.7 0.0,252.7" fill="#1b1b1d"/>
<polyline points="34.6,127.0 84.3,103.9 108.4,114.4" fill="none" stroke="#3a444e" stroke-width="5.1" stroke-linecap="round" stroke-linejoin="round"/>
<polyline points="49.7,127.0 90.3,105.4" fill="none" stroke="#7e8a94" stroke-width="1.5" stroke-linecap="round" stroke-linejoin="round"/>
<polyline points="90.3,105.4 96.3,127.0" fill="none" stroke="#9aa4ac" stroke-width="2.1" stroke-linecap="round" stroke-linejoin="round"/>
<polyline points="28.6,136.0 96.3,130.0 111.4,139.0" fill="none" stroke="#343c46" stroke-width="6.6" stroke-linecap="round" stroke-linejoin="round"/>
<polyline points="25.6,137.5 9.0,176.7 0.0,184.2" fill="none" stroke="#22262c" stroke-width="4.5" stroke-linecap="round" stroke-linejoin="round"/>
<polyline points="37.6,149.6 3.0,166.1" fill="none" stroke="#20242a" stroke-width="3.3" stroke-linecap="round" stroke-linejoin="round"/>
<polyline points="100.8,136.0 111.4,176.7" fill="none" stroke="#4c545a" stroke-width="9.0" stroke-linecap="round" stroke-linejoin="round"/>
<polygon points="159.5,103.9 202.4,96.3 204.7,120.4 165.6,127.0" fill="#a67a62"/>
<path d="M135.5 127 L147 116 L159.5 108.5 Q178 124 203 97 L225 96 L241 104 Q258 116 266 130 L294 180 L262.6 198 L262.6 252 L151 252 L150.5 217 L108.4 211 L111.4 193 L129.4 136 Z" fill="#efedf0"/>
<path d="M135.5 127 L129.4 136 L111.4 193 L108.4 211 L150.5 217 L152 180 Z" fill="#dedee6"/>
<path d="M262.6 198 L294 180 L285 165 L258 185 Z" fill="#d8d8e0"/>
<path d="M150 217 L151 252 L200 252 Q180 220 185 170 Q170 200 150 217 Z" fill="#cfcfd8" opacity=".55" filter="url(#b2)"/>
<path d="M240 110 Q262 150 262 200 L262 252 L235 252 Q250 190 240 110 Z" fill="#cdcdd6" opacity=".6" filter="url(#b2)"/>
<path d="M160 110 Q180 128 204 99 L206 106 Q182 136 158 116 Z" fill="#c8c8d0" opacity=".7"/>
<path d="M170 140 q10 40 0 100" fill="none" stroke="#d6d6de" stroke-width="3"/>
<path d="M215 130 q-12 50 -2 110" fill="none" stroke="#dadae2" stroke-width="3"/>
<rect x="208" y="148.500" width="21" height="19" fill="#e6e4e6" stroke="#5a5a5e" stroke-width="0.800"/>
<path d="M219 150 l4 0 l3 16 l-7 0 Z" fill="#4a4a4e"/>
<rect x="211" y="169.500" width="19" height="2.200" fill="#55555a"/>
<polygon points="122.2,215.8 150.8,217.6 150.8,252.7 129.7,252.7 122.2,233.1" fill="#a98061"/>
<polygon points="294.2,179.7 262.6,197.7 274.7,220.3 282.2,252.7 312.6,252.7 306.6,220.3" fill="#b58b6d"/>
<ellipse cx="177.3" cy="81.3" rx="24.8" ry="30.1" fill="#c59a82"/>
<rect x="152.3" y="53.4" width="49.4" height="28.6" fill="#c59a82"/>
<ellipse cx="151.0" cy="73.8" rx="3.0" ry="6.3" fill="#b48a72"/>
<path d="M152.500 80 q1 20 10 27 q14 9 29 0 q9 -7 10.500 -27 q-4 8 -9 12 q-4 -5 -16 -5 q-12 0 -15 5 q-6 -4 -9.500 -12 Z" fill="#4c362c"/>
<path d="M156 84 q2 8 7 12 l3 -7 Z" fill="#7c5c4a" opacity=".6"/>
<path d="M199 82 q-2 8 -7 12 l-3 -7 Z" fill="#7c5c4a" opacity=".6"/>
<path d="M164 85 q6 -7 13 -5 q8 -2 13 4 l1 5 q-7 -5 -14 -4 q-7 -1 -13 5 Z" fill="#3a281f"/>
<polygon points="170.8,87.9 188.1,87.0 187.4,90.3 173.1,90.9" fill="#c9a096"/>
<rect x="161.0" y="64.4" width="9.8" height="2.1" fill="#3a2a24"/>
<rect x="182.9" y="62.3" width="10.5" height="2.1" fill="#3a2a24"/>
<ellipse cx="177.6" cy="75.3" rx="3.3" ry="4.5" fill="#ad8169"/>
<path d="M151 74 q-3 -4 -5 -14 q-6 -26 18 -32 q24 -6 34 8 q8 12 3 34 l-3 4 q0 -14 -6 -20 q-18 6 -32 2 q-8 6 -9 18 Z" fill="#2a1e1a"/>
<ellipse cx="78.3" cy="217.3" rx="12.0" ry="8.3" fill="#141416"/>
<polygon points="126.7,140.2 139.4,152.0 90.6,215.5 71.9,202.3" fill="#3a4246"/>
<polygon points="126.7,140.2 139.4,152.0 134.0,159.4 120.4,148.1" fill="#2e3438"/></g></svg><!--/WC--></div>
<div id="taskbar">
<div class="abs" style="left:0;top:0;width:48px;height:40px;background:#3f4226"></div>
<div class="abs" style="left:48px;top:0;width:279px;height:40px;background:#303030"></div>
<svg class="abs" style="left:15px;top:11px" width="17" height="17" viewBox="0 0 17 17"><g fill="#f2f2e6"><path d="M0 2.4 L6.8 1.4 V8 H0Z"/><path d="M7.8 1.25 L17 0 V8 H7.8Z"/><path d="M0 9 H6.8 V15.6 L0 14.6Z"/><path d="M7.8 9 H17 V17 L7.8 15.75Z"/></g></svg>
<svg class="abs" style="left:57px;top:10px" width="20" height="20" viewBox="0 0 20 20"><circle cx="12" cy="7.5" r="5.2" fill="none" stroke="#e6e6e6" stroke-width="1.3"/><path d="M8.3 11.3 L1.5 18" stroke="#e6e6e6" stroke-width="1.3"/></svg>
<div class="abs" style="left:86.5px;top:12px;font-size:13.7px;line-height:16px;color:#eae4d8;white-space:nowrap">Buscar</div>
<!--narwhal-->
<svg class="abs" style="left:258px;top:3px" width="64" height="36" viewBox="0 0 64 36"><defs><linearGradient id="nw" x1="0" y1="0" x2="0" y2="1"><stop offset="0" stop-color="#58b4d2"/><stop offset="1" stop-color="#2387a2"/></linearGradient></defs><path d="M2.100 1.300 L15.800 12.200 L13 14.500 Z" fill="#3fa2c2"/><path d="M11.700 17.300 Q12 12.500 17 10 Q24 7.600 32 10.500 Q41 14.300 49.500 14.300 Q54 10 55.500 5 Q57 2.500 59.700 1.900 Q57 8 57.500 13.500 Q58 19 60.300 23.200 Q55 22.500 52.500 18.500 Q50 17 48 19 Q42 26.500 32 29.500 Q22 30.500 15 25 Q11.500 22 11.700 17.300 Z" fill="url(#nw)"/><path d="M11.700 17.300 Q16 18 20 20.600 Q25 24 31 25 Q40 24 49.800 15.500 Q47 22 40 26.500 Q33 30.500 26 29.500 Q17 28.500 13 22.500 Q11.500 20 11.700 17.300 Z" fill="#ece8f6"/><path d="M14 24 Q10 27.500 8.500 32.500 Q13 32 16.500 27.500 Z" fill="#2a8aa6"/><path d="M25 22 Q28 29 34 35 Q35 30 32.500 25 Q29 21.500 25 22 Z" fill="#2587a3"/><ellipse cx="22.200" cy="15.800" rx="1.600" ry="1.300" fill="#0d2230"/></svg>
<!--taskview-->
<svg class="abs" style="left:343px;top:11px" width="18" height="17" viewBox="0 0 18 17"><g fill="none" stroke="#ecece4" stroke-width="1.2"><rect x="2.6" y="3.6" width="7.8" height="9.8"/><path d="M0 0.8 H13 M0 16.2 H13 M15.8 0 V5 M15.8 9 V17"/></g><rect x="15" y="6" width="1.8" height="2" fill="#fff"/></svg>
<!--folder-->
<svg class="abs" style="left:390px;top:9px" width="23" height="20" viewBox="0 0 23 20"><path d="M0 1.5 Q0 0.5 1 0.5 H8 L10 2.5 H22 Q23 2.5 23 3.5 V18 H0Z" fill="#f4b62a"/><path d="M0 5 H23 V19 H0Z" fill="#fcd462"/><path d="M4 19 V12.5 Q4 11.5 5 11.5 H18 Q19 11.5 19 12.5 V19 H15 V15 H8 V19Z" fill="#3d8fd8"/></svg>
<!--store-->
<svg class="abs" style="left:437px;top:7px" width="25" height="26" viewBox="0 0 25 26"><path d="M7.5 7 V3.5 Q7.5 1.5 9.5 1.5 H15.5 Q17.500 1.5 17.500 3.5 V7" fill="none" stroke="#39a0e6" stroke-width="1.8"/><path d="M1 6 H24 V21 Q24 24.5 20.5 24.5 H4.5 Q1 24.5 1 21Z" fill="#f4f4f4"/><rect x="8" y="10" width="4.2" height="4.2" fill="#f25022"/><rect x="12.9" y="10" width="4.2" height="4.2" fill="#7fba00"/><rect x="8" y="14.900" width="4.2" height="4.2" fill="#00a4ef"/><rect x="12.9" y="14.900" width="4.2" height="4.2" fill="#ffb900"/></svg>
<!--mail-->
<svg class="abs" style="left:486px;top:8px" width="25" height="24" viewBox="0 0 25 24"><path d="M0.5 8 L12.5 0.5 L24.5 8 V13 H0.5Z" fill="#1565c0"/><path d="M3 7.500 H22 V16 H3Z" fill="#f2f2f2"/><path d="M0.500 8 L12.500 15.500 L24.500 8 V23 H0.500Z" fill="#1e96e6"/><path d="M0.500 23 L12.500 15.500 L24.500 23Z" fill="#3fb3f2" opacity=".85"/></svg>
<!--monitor-->
<svg class="abs" style="left:535px;top:11px" width="24" height="18" viewBox="0 0 24 18"><defs><linearGradient id="mon" x1="0" y1="0" x2="1" y2="1"><stop offset="0" stop-color="#8fa9c9"/><stop offset="1" stop-color="#d6e2f0"/></linearGradient></defs><rect x="0.500" y="0.500" width="23" height="17" rx="1.5" fill="#4a4a4a" stroke="#8a8a8a"/><rect x="2" y="2" width="20" height="13.500" fill="url(#mon)"/></svg>
<!--whatsapp-->
<svg class="abs" style="left:582px;top:7px" width="36" height="30" viewBox="0 0 36 30"><path d="M12.700 2 A10.300 10.300 0 1 1 7.600 21.300 L2.200 23 L3.900 17.800 A10.300 10.300 0 0 1 12.700 2Z" fill="none" stroke="#2fd064" stroke-width="2.400" stroke-linejoin="round"/><path d="M8.800 8 Q9.800 6.500 10.800 8.300 L11.500 10 Q11 11 10.500 11.500 Q12 14.500 15 15.800 Q16 14.500 16.600 14.600 L18.500 15.600 Q18.800 17.600 16.500 18 Q13 18.300 10 15 Q7.500 12 8.800 8Z" fill="#2fd064"/><circle cx="25.700" cy="20" r="7.300" fill="#2a2c2c" stroke="#8a8a8a" stroke-width="1"/><text x="25.700" y="23.900" font-family="Liberation Sans,sans-serif" font-size="10.500" font-weight="bold" fill="#fff" text-anchor="middle">1</text></svg>
<!--opera-->
<svg class="abs" style="left:631px;top:6px" width="26" height="26" viewBox="0 0 26 26"><circle cx="13" cy="13" r="11.400" fill="none" stroke="#e8284e" stroke-width="1.800"/><ellipse cx="13" cy="13" rx="6.300" ry="10" fill="none" stroke="#e8284e" stroke-width="1.700"/></svg>
<div class="abs" style="left:669px;top:0;width:47.500px;height:40px;background:#615d51"></div>
<!--chrome1-->
<svg class="abs" style="left:679px;top:6px" width="28" height="28" viewBox="0 0 28 28"><circle cx="13" cy="12.500" r="12" fill="#e33b2e"/><path d="M13 12.500 L23.400 6.500 A12 12 0 0 1 14 24.450 L13 12.500Z" fill="#fbc116"/><path d="M13 12.500 L14 24.450 A12 12 0 0 1 1.800 8 L13 12.500Z" fill="#2da94f"/><path d="M1.800 8 A12 12 0 0 1 23.400 6.500 L13 12.500Z" fill="#e33b2e"/><circle cx="13" cy="12.500" r="5.600" fill="#f4f4f4"/><circle cx="13" cy="12.500" r="4.400" fill="#3f7de0"/><circle cx="19.500" cy="19.500" r="7.500" fill="#d81b72"/><text x="19.500" y="22.800" font-family="Liberation Sans,sans-serif" font-size="9" fill="#fff" text-anchor="middle">El</text></svg>
<!--chrome2-->
<svg class="abs" style="left:727px;top:6px" width="30" height="28" viewBox="0 0 30 28"><circle cx="13" cy="12.500" r="12" fill="#e33b2e"/><path d="M13 12.500 L23.400 6.500 A12 12 0 0 1 14 24.450 L13 12.500Z" fill="#fbc116"/><path d="M13 12.500 L14 24.450 A12 12 0 0 1 1.800 8 L13 12.500Z" fill="#2da94f"/><path d="M1.800 8 A12 12 0 0 1 23.400 6.500 L13 12.500Z" fill="#e33b2e"/><circle cx="13" cy="12.500" r="5.600" fill="#f4f4f4"/><circle cx="13" cy="12.500" r="4.400" fill="#3f7de0"/><circle cx="21" cy="19.500" r="7.300" fill="#8a8272"/><circle cx="19.500" cy="17.500" r="3" fill="#c8c0b4"/><circle cx="23.500" cy="21.500" r="2.600" fill="#4a4238"/></svg>
<!--spotify-->
<svg class="abs" style="left:777px;top:8px" width="24" height="24" viewBox="0 0 24 24"><circle cx="12" cy="12" r="11.500" fill="#1ed760"/><g fill="none" stroke="#10180f" stroke-linecap="round"><path d="M5.300 8.600 Q12 6.300 18.900 9.600" stroke-width="2.300"/><path d="M6 12.300 Q12 10.400 17.700 13.200" stroke-width="1.900"/><path d="M6.800 15.800 Q11.800 14.400 16.400 16.500" stroke-width="1.600"/></g></svg>
<div class="abs" style="left:624px;top:36.500px;width:40px;height:4px;background:#76b4ea"></div>
<div class="abs" style="left:669px;top:36.500px;width:47.500px;height:4px;background:#82bdf0"></div>
<div class="abs" style="left:721px;top:36.500px;width:40px;height:4px;background:#76b4ea"></div>
<svg class="abs" style="left:1066px;top:11px" width="25" height="17" viewBox="0 0 25 17"><g fill="none" stroke="#b4c8e2" stroke-width="1.800" stroke-linecap="round"><path d="M1 5.500 H13 A2.600 2.600 0 1 0 10.600 2.200"/><path d="M1 9 H19.500 A2.600 2.600 0 1 0 17.200 5.600"/><path d="M4 12.500 H15 A2.400 2.400 0 1 1 12.800 15.400"/></g><circle cx="13" cy="3.400" r="2.700" fill="#c8d8ee"/><circle cx="19.800" cy="7" r="2.700" fill="#c8d8ee"/><circle cx="15" cy="14.400" r="2.400" fill="#c8d8ee"/></svg>
<div class="abs" style="left:1098.5px;top:11.5px;font-size:14.2px;line-height:17px;color:#f0f0ea;white-space:nowrap;letter-spacing:-0.75px">31°C</div>
<div class="abs" style="left:1136px;top:11.5px;font-size:14.2px;line-height:17px;color:#f0f0ea;white-space:nowrap;letter-spacing:-0.2px">Ventoso</div>
<svg class="abs" style="left:1209px;top:15px" width="15" height="9" viewBox="0 0 15 9"><path d="M1 8 L7.500 1.500 L14 8" fill="none" stroke="#f0f0ea" stroke-width="1.300"/></svg>
<svg class="abs" style="left:1234px;top:11px" width="14" height="17" viewBox="0 0 14 17"><g fill="none" stroke="#e8e8e0" stroke-width="1.100"><rect x="1" y="4.500" width="7.500" height="8" rx="1.500"/><path d="M8.500 7.500 L12.500 5.500 V11.500 L8.500 9.500"/><path d="M2 2.500 Q5 0.500 9 2.500 M2 14.500 Q5 16.500 9 14.500"/></g></svg>
<svg class="abs" style="left:1255px;top:10px" width="19" height="18" viewBox="0 0 19 18"><g fill="none" stroke="#e8e8e0" stroke-width="1.200"><path d="M1 3.500 L16 1 V14 L1 15.500Z"/><path d="M5 5 H12 V11.500 H5Z" stroke-width="0.900"/><path d="M7 8.500 H11 M8.500 6.800 L6.800 8.500 L8.500 10.200" stroke-width="0.900"/></g><circle cx="12.800" cy="14" r="3" fill="#3a84e0"/></svg>
<svg class="abs" style="left:1278px;top:13px" width="18" height="12" viewBox="0 0 18 12"><rect x="4" y="2.500" width="13" height="8" rx="1" fill="#f0f0ea"/><rect x="5.300" y="3.800" width="10.400" height="5.400" fill="#c8c8c0"/><path d="M2.500 0.500 V6 M0.800 1 V3.500 H4.200 V1" fill="none" stroke="#f0f0ea" stroke-width="1"/></svg>
<svg class="abs" style="left:1303px;top:12px" width="15" height="15" viewBox="0 0 15 15"><g fill="none" stroke="#e8e8e0" stroke-width="1.200"><path d="M1.500 14 A12.500 12.500 0 0 1 14 1.500"/><path d="M5 14 A9 9 0 0 1 14 5"/><path d="M8.500 14 A5.500 5.500 0 0 1 14 8.500" stroke="#9a9a92"/></g><circle cx="12.800" cy="12.800" r="1.400" fill="#f0f0ea"/></svg>
<svg class="abs" style="left:1325px;top:12px" width="18" height="15" viewBox="0 0 18 15"><g fill="none" stroke="#e8e8e0" stroke-width="1.100"><path d="M1 5 H3.500 L7 1.500 V13.500 L3.500 10 H1Z"/><path d="M9.500 5 Q11 7.500 9.500 10"/><path d="M12 3 Q14.500 7.500 12 12"/><path d="M14.500 1 Q18 7.500 14.500 14" stroke="#8a8a82"/></g></svg>
<div class="abs" style="left:1352px;top:13px;font-size:11px;line-height:14px;color:#f0f0ea;white-space:nowrap;letter-spacing:-0.5px">ENG</div>
<div class="abs" style="left:1380px;top:3.500px;width:68px;text-align:center;font-size:11.500px;line-height:14px;color:#f0f0ea;white-space:nowrap;letter-spacing:-0.300px">5:22 p. m.</div>
<div class="abs" style="left:1380px;top:22px;width:68px;text-align:center;font-size:11.500px;line-height:14px;color:#f0f0ea;white-space:nowrap;letter-spacing:0.18px">23/7/2024</div>
<svg class="abs" style="left:1459px;top:10px" width="26" height="26" viewBox="0 0 26 26"><path d="M1 1 H17 V13 H6 L1 17.500Z" fill="#f0f0ea"/><path d="M4 4.500 H14 M4 7.500 H14 M4 10.500 H11" stroke="#2a2e1e" stroke-width="1"/><circle cx="16.500" cy="17" r="7.300" fill="#2a2c22" stroke="#77776c" stroke-width="1"/><text x="16.500" y="20.800" font-family="Liberation Sans,sans-serif" font-size="10.500" font-weight="bold" fill="#fff" text-anchor="middle">2</text></svg>
<div class="abs" style="left:1495px;top:0;width:1px;height:40px;background:#55584a"></div>
</div>
</body>
</html>
